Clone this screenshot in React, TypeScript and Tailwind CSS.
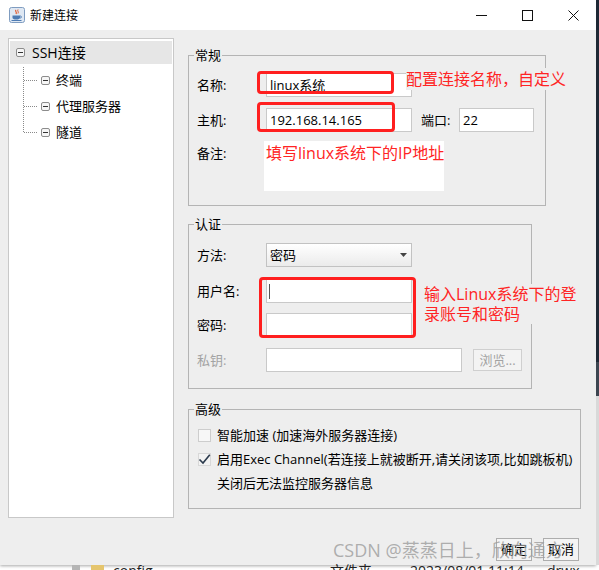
import type { ReactNode } from 'react';

const font = "font-['Open_Sans','Noto_Sans_CJK_SC',sans-serif]";
const cjk = "font-['Noto_Sans_CJK_SC',sans-serif]";

function JavaIcon() {
  return (
    <svg width="16" height="16" viewBox="0 0 16 16">
      <rect x="0.5" y="0.5" width="15" height="15" rx="2" fill="#dfe8f3" stroke="#7f9cc0" />
      <path d="M7 3 C5.5 4.5 8.5 5 7 7" stroke="#e2582b" strokeWidth="1.2" fill="none" />
      <path d="M9 2.5 C8 4 10 4.5 9 6.5" stroke="#e2582b" strokeWidth="1" fill="none" />
      <path d="M3.5 8.5 H11 V10.5 C11 12 9.5 12.5 7.2 12.5 C5 12.5 3.5 12 3.5 10.5 Z" fill="#4d7bb3" />
      <path d="M11 9 C13 9 13 11 11 11" stroke="#4d7bb3" strokeWidth="1" fill="none" />
      <path d="M2.5 13.5 H12.5" stroke="#4d7bb3" strokeWidth="1" />
    </svg>
  );
}

function WinButton({ children }: { children: ReactNode }) {
  return <div className="w-[46px] h-[30px] flex items-center justify-center">{children}</div>;
}

function MinusBox() {
  return (
    <svg width="9" height="9" viewBox="0 0 9 9" className="shrink-0">
      <rect x="0.5" y="0.5" width="8" height="8" rx="1.5" fill="#f6f6f6" stroke="#8c8c8c" />
      <path d="M2 4.5 H7" stroke="#333" strokeWidth="1" />
    </svg>
  );
}

// dotted connector from the tree trunk to a child node
function Connector({ last }: { last?: boolean }) {
  return (
    <svg width="18" height="26" viewBox="0 0 18 26" className="shrink-0">
      <path
        d={last ? 'M0.5 0 V13' : 'M0.5 0 V26'}
        stroke="#8a8a8a"
        strokeDasharray="1 1"
      />
      <path d="M1 13.5 H14" stroke="#8a8a8a" strokeDasharray="1 1" />
    </svg>
  );
}

function TreeChild({ label, last }: { label: string; last?: boolean }) {
  return (
    <div className="flex items-center h-[26px] pl-[13px]">
      <Connector last={last} />
      <MinusBox />
      <span className="ml-[6px] text-[13px] leading-[20px] text-black">{label}</span>
    </div>
  );
}

function Group({
  title,
  className,
  children,
}: {
  title: string;
  className: string;
  children: ReactNode;
}) {
  return (
    <div className={`relative border border-[#b4b4b4] ${className}`}>
      <span className="absolute -top-[10px] left-[5px] px-[1px] bg-[#eeeeee] text-[13px] leading-[18px] text-black">
        {title}
      </span>
      {children}
    </div>
  );
}

function Label({ children, muted }: { children: ReactNode; muted?: boolean }) {
  return (
    <span
      className={`w-[69px] shrink-0 text-[13px] leading-[24px] ${muted ? 'text-[#a3a3a3]' : 'text-black'}`}
    >
      {children}
    </span>
  );
}

function Input({ value, className = 'w-[146px]' }: { value?: string; className?: string }) {
  return (
    <div
      className={`h-[24px] ${className} border border-[#c9c9c9] bg-white pl-[3px] text-[13px] leading-[22px] text-black`}
    >
      {value}
    </div>
  );
}

function Note({ children, className }: { children: ReactNode; className: string }) {
  return (
    <div
      className={`absolute bg-[#eeeeee] text-[16px] leading-[20px] text-[#ff2424] whitespace-nowrap ${className}`}
    >
      {children}
    </div>
  );
}

export default function App() {
  return (
    <div className={`relative w-[599px] h-[570px] overflow-hidden bg-white ${font}`}>
      <div className="flex h-[565px]">
        <div className="w-[596px] flex flex-col shadow-[0_1px_3px_rgba(0,0,0,0.35)]">
          {/* title bar */}
          <div className="h-[30px] bg-white flex items-center">
            <div className="ml-[9px]">
              <JavaIcon />
            </div>
            <span className={`ml-[5px] text-[12px] leading-[16px] text-black ${cjk}`}>新建连接</span>
            <div className="ml-auto flex">
              <WinButton>
                <svg width="11" height="11" viewBox="0 0 11 11">
                  <path d="M0 5.5 H11" stroke="#111" />
                </svg>
              </WinButton>
              <WinButton>
                <svg width="11" height="11" viewBox="0 0 11 11">
                  <rect x="0.5" y="0.5" width="10" height="10" fill="none" stroke="#111" />
                </svg>
              </WinButton>
              <WinButton>
                <svg width="11" height="11" viewBox="0 0 11 11">
                  <path d="M0.5 0.5 L10.5 10.5 M10.5 0.5 L0.5 10.5" stroke="#111" />
                </svg>
              </WinButton>
            </div>
          </div>

          {/* dialog body */}
          <div className="flex-1 bg-[#eeeeee] flex pl-[8px] pt-[8px]">
            <div className="w-[166px] h-[480px] border border-[#c8c8c8] bg-white p-px">
              <div className="mt-px h-[23px] bg-[#e6e6e6] flex items-center pl-[6px]">
                <MinusBox />
                <span className="ml-[7px] text-[14px] leading-[20px] text-black">SSH连接</span>
              </div>
              <div className="mt-[3px]">
                <TreeChild label="终端" />
                <TreeChild label="代理服务器" />
                <TreeChild label="隧道" last />
              </div>
            </div>

            <div className="ml-[14px] pt-[17px] flex flex-col">
              <Group title="常规" className="w-[358px] h-[151px] pt-[17px] pl-[8px]">
                <div className="flex items-center">
                  <Label>名称:</Label>
                  <Input value="linux系统" />
                </div>
                <div className="mt-[11px] flex items-center">
                  <Label>主机:</Label>
                  <Input value="192.168.14.165" />
                  <span className="ml-[9px] w-[38px] text-[13px] leading-[24px] text-black">端口:</span>
                  <Input value="22" className="w-[75px]" />
                </div>
                <div className="mt-[9px] flex">
                  <Label>备注:</Label>
                  <div className="-ml-[2px] w-[180px] h-[50px] bg-white pl-[2px] text-[16px] leading-[24px] text-[#ff2424] whitespace-nowrap">
                    填写linux系统下的IP地址
                  </div>
                </div>
                <div className="absolute left-[68px] top-[15px] w-[137px] h-[23px] border-[3px] border-[#ff1f1f] rounded-[4px]" />
                <div className="absolute left-[68px] top-[46px] w-[138px] h-[30px] border-[3px] border-[#ff1f1f] rounded-[4px]" />
                <Note className="left-[217px] top-[12px] leading-[22px]">配置连接名称，自定义</Note>
              </Group>

              <Group title="认证" className="mt-[18px] w-[344px] h-[165px] pt-[18px] pl-[8px]">
                <div className="flex items-center">
                  <Label>方法:</Label>
                  <div className="h-[24px] w-[146px] border border-[#c2c2c2] bg-linear-to-b from-white to-[#ebebeb] pl-[3px] flex items-center text-[13px] text-black">
                    <span className="leading-[22px]">密码</span>
                    <svg width="7" height="4" viewBox="0 0 7 4" className="ml-auto mr-[4px]">
                      <path d="M0 0 H7 L3.5 4 Z" fill="#444" />
                    </svg>
                  </div>
                </div>
                <div className="mt-[12px] flex items-center">
                  <Label>用户名:</Label>
                  <div className="h-[24px] w-[146px] border border-[#c9c9c9] bg-white pl-[2px] flex items-center">
                    <span className="w-px h-[15px] bg-[#555]" />
                  </div>
                </div>
                <div className="mt-[10px] flex items-center">
                  <Label>密码:</Label>
                  <Input />
                </div>
                <div className="mt-[11px] flex items-center">
                  <Label muted>私钥:</Label>
                  <Input className="w-[196px]" />
                  <div className="ml-[11px] w-[49px] h-[22px] border border-[#cfcfcf] bg-[#f3f3f3] flex items-center justify-center text-[13px] leading-[18px] text-[#a3a3a3]">
                    浏览...
                  </div>
                </div>
                <div className="absolute left-[70px] top-[52px] w-[157px] h-[61px] border-[3px] border-[#ff1f1f] rounded-[4px]" />
                <Note className="left-[235px] top-[59px]">
                  输入Linux系统下的登
                  <br />
                  录账号和密码
                </Note>
              </Group>

              <Group title="高级" className="mt-[20px] w-[393px] h-[100px] pt-[13px] pl-[9px]">
                <div className="h-[24px] flex items-center">
                  <span className="w-[13px] h-[13px] border border-[#cdcdcd] bg-[#f7f7f7]" />
                  <span className="ml-[6px] text-[13px] leading-[20px] text-black">
                    智能加速 (加速海外服务器连接)
                  </span>
                </div>
                <div className="h-[24px] flex items-center">
                  <svg width="13" height="13" viewBox="0 0 13 13" className="shrink-0">
                    <rect x="0.5" y="0.5" width="12" height="12" fill="#f3f3f3" stroke="#d8d8d8" />
                    <path d="M1.5 6.5 L5 10 L11.8 1.8" stroke="#2b3a4d" strokeWidth="1.6" fill="none" />
                  </svg>
                  <span className="ml-[6px] text-[13px] leading-[20px] text-black whitespace-nowrap">
                    启用Exec Channel(若连接上就被断开,请关闭该项,比如跳板机)
                  </span>
                </div>
                <div className="h-[24px] flex items-center pl-[19px] text-[13px] leading-[20px] text-black">
                  关闭后无法监控服务器信息
                </div>
              </Group>

              <div className="mt-[29px] w-[393px] pr-[2px] flex justify-end gap-[11px]">
                <div className="w-[36px] h-[23px] border border-[#adadad] bg-[#f4f4f4] flex items-center justify-center text-[13px] text-black">
                  确定
                </div>
                <div className="w-[36px] h-[23px] border border-[#adadad] bg-[#f4f4f4] flex items-center justify-center text-[13px] text-black">
                  取消
                </div>
              </div>
            </div>
          </div>
        </div>

        {/* desktop strip behind the dialog */}
        <div className="flex-1 flex flex-col">
          <div className="h-[362px] bg-[#1e2835]" />
          <div className="h-[34px] bg-[#3c4550]" />
          <div className="flex-1 bg-[#d9d9d9]" />
        </div>
      </div>

      {/* file list peeking out under the dialog */}
      <div className="h-[5px] bg-white flex items-start text-[14px] leading-[12px] text-[#222]">
        <span className="ml-[72px] w-[8px] h-[5px] bg-[#b5b5b5]" />
        <span className="ml-[11px] w-[13px] h-[5px] bg-[#e5c56d]" />
        <span className="ml-[9px] w-[217px]">config</span>
        <span className="w-[80px]">文件夹</span>
        <span className="w-[137px]">2023/08/01 11:14</span>
        <span>drwx----</span>
      </div>

      <div className="absolute left-[333px] top-[538px] text-[18px] leading-[24px] text-[#9c9c9c]/80 whitespace-nowrap">
        CSDN @蒸蒸日上，欣向通方
      </div>
    </div>
  );
}
